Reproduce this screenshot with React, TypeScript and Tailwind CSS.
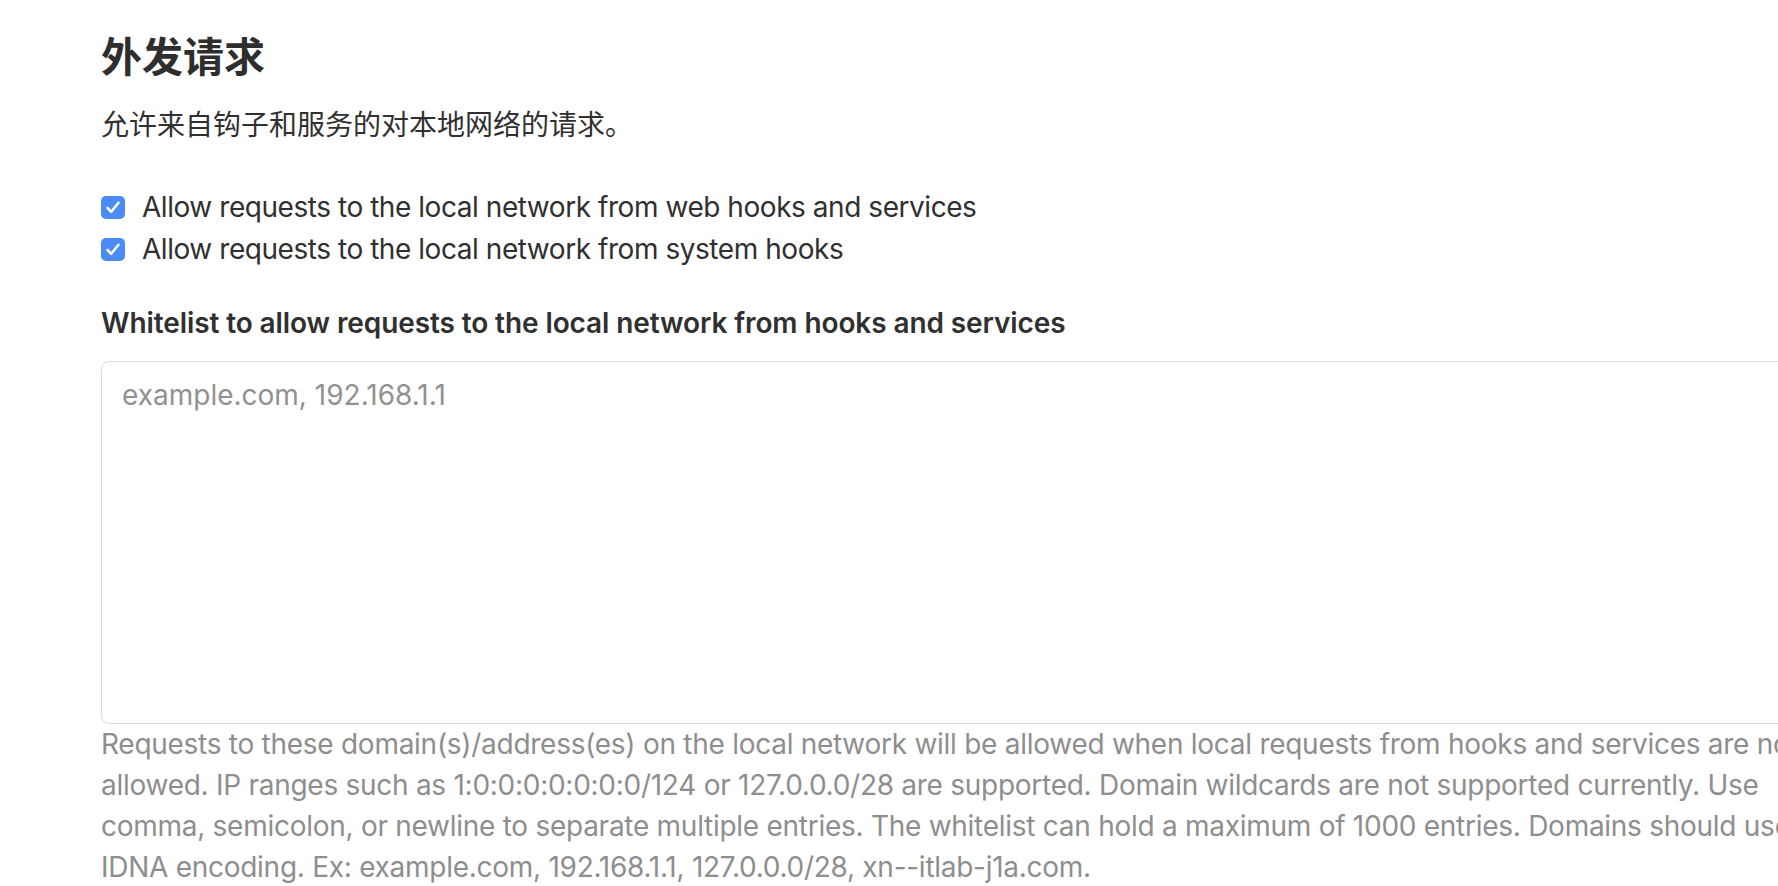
import React from "react";

function Check() {
  return (
    <div className="w-[24px] h-[23px] rounded-[5px] bg-[#4b8bf5] flex items-center justify-center shrink-0">
      <svg width="24" height="23" viewBox="0 0 24 23" fill="none">
        <path d="M6.5 12 L10.2 15.8 L17.5 6.8" stroke="white" strokeWidth="2.6" strokeLinecap="round" strokeLinejoin="round" />
      </svg>
    </div>
  );
}

const help = [
  "Requests to these domain(s)/address(es) on the local network will be allowed when local requests from hooks and services are not",
  "allowed. IP ranges such as 1:0:0:0:0:0:0:0/124 or 127.0.0.0/28 are supported. Domain wildcards are not supported currently. Use",
  "comma, semicolon, or newline to separate multiple entries. The whitelist can hold a maximum of 1000 entries. Domains should use",
  "IDNA encoding. Ex: example.com, 192.168.1.1, 127.0.0.0/28, xn--itlab-j1a.com.",
];

export default function App() {
  return (
    <div className="w-[1778px] h-[886px] overflow-hidden bg-white pt-[30px] pl-[101px] text-[#303030] font-['Inter','Noto_Sans_CJK_SC',sans-serif]">
      <h2 className="text-[41px] leading-[48px] font-bold text-[#2e2e2e] font-['Noto_Sans_CJK_SC',sans-serif]">
        外发请求
      </h2>
      <p className="mt-[25px] text-[28px] leading-[40px] font-['Noto_Sans_CJK_SC',sans-serif]">
        允许来自钩子和服务的对本地网络的请求。
      </p>
      <div className="mt-[43px] flex flex-col text-[28px] tracking-[-0.45px]">
        <label className="flex items-center gap-[17px] h-[42px]">
          <Check />
          <span>Allow requests to the local network from web hooks and services</span>
        </label>
        <label className="flex items-center gap-[17px] h-[42px]">
          <Check />
          <span>Allow requests to the local network from system hooks</span>
        </label>
      </div>
      <div className="mt-[33px] text-[28px] leading-[40px] font-semibold tracking-[-0.1px]">
        Whitelist to allow requests to the local network from hooks and services
      </div>
      <div className="mt-[18px] w-[1690px] h-[363px] border border-[#dcdcdc] rounded-[8px] pt-[13px] pl-[20px] text-[28px] leading-[40px] text-[#919191]">
        example.com, 192.168.1.1
      </div>
      <div className="text-[28px] leading-[41px] tracking-[-0.27px] text-[#8e8e8e]">
        {help.map((l, i) => (
          <div key={i} className="whitespace-nowrap">
            {l}
          </div>
        ))}
      </div>
    </div>
  );
}
